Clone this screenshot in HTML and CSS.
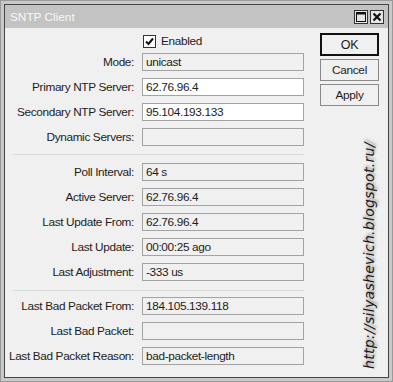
FILE: index.html
```html
<!DOCTYPE html>
<html>
<head>
<meta charset="utf-8">
<link rel="stylesheet" href="styles.css">
</head>
<body>
<div class="window">
  <div class="titlebar">
    <span class="title">SNTP Client</span>
    <div class="tbtns">
      <span class="tbtn"><svg width="12" height="12" viewBox="0 0 12 12"><rect x="1.5" y="1.5" width="9" height="9" fill="none" stroke="#111" stroke-width="1"/><rect x="1.5" y="1.5" width="9" height="2" fill="#111"/></svg></span>
      <span class="tbtn"><svg width="12" height="12" viewBox="0 0 12 12"><path d="M2.5 2.5 L9.5 9.5 M9.5 2.5 L2.5 9.5" stroke="#111" stroke-width="2.2"/></svg></span>
    </div>
  </div>
  <div class="content">
    <div class="form">
      <div class="row check-row">
        <span class="lbl"></span>
        <label class="check"><span class="box"><svg width="11" height="11" viewBox="0 0 11 11"><path d="M2 5.5 L4.5 8 L9 2.5" fill="none" stroke="#111" stroke-width="2"/></svg></span>Enabled</label>
      </div>
      <div class="row"><span class="lbl">Mode:</span><span class="field ro">unicast</span></div>
      <div class="row"><span class="lbl">Primary NTP Server:</span><span class="field ed">62.76.96.4</span></div>
      <div class="row"><span class="lbl">Secondary NTP Server:</span><span class="field ed">95.104.193.133</span></div>
      <div class="row"><span class="lbl">Dynamic Servers:</span><span class="field ro"></span></div>
      <div class="sep"></div>
      <div class="row"><span class="lbl">Poll Interval:</span><span class="field ro">64 s</span></div>
      <div class="row"><span class="lbl">Active Server:</span><span class="field ro">62.76.96.4</span></div>
      <div class="row"><span class="lbl">Last Update From:</span><span class="field ro">62.76.96.4</span></div>
      <div class="row"><span class="lbl">Last Update:</span><span class="field ro">00:00:25 ago</span></div>
      <div class="row"><span class="lbl">Last Adjustment:</span><span class="field ro">-333 us</span></div>
      <div class="sep sep2"></div>
      <div class="row"><span class="lbl">Last Bad Packet From:</span><span class="field ro">184.105.139.118</span></div>
      <div class="row"><span class="lbl">Last Bad Packet:</span><span class="field ro"></span></div>
      <div class="row"><span class="lbl">Last Bad Packet Reason:</span><span class="field ro">bad-packet-length</span></div>
    </div>
    <div class="buttons">
      <button class="btn default">OK</button>
      <button class="btn">Cancel</button>
      <button class="btn">Apply</button>
    </div>
    <div class="watermark">http://silyashevich.blogspot.ru/</div>
  </div>
</div>
</body>
</html>
```

FILE: styles.css
```css
html, body {
  margin: 0;
  padding: 0;
  background: #f0f0f0;
}
body {
  font-family: "Liberation Sans", Arial, sans-serif;
  font-size: 11.8px;
  letter-spacing: -0.35px;
  color: #1c1c1c;
}
.window {
  width: 393px;
  height: 382px;
  box-sizing: border-box;
  border: 1px solid #9a9a9a;
  background: #c9c9c9;
  padding: 3px;
  display: flex;
  flex-direction: column;
}
.titlebar {
  height: 23px;
  flex: none;
  background: #c3c3c3;
  border: 1px solid #444;
  border-bottom: none;
  display: flex;
  align-items: center;
  justify-content: space-between;
  padding: 0 4px 0 5px;
}
.title {
  color: #f7f7f7;
  font-family: "Liberation Sans", sans-serif;
  font-size: 11.8px;
  letter-spacing: 0;
}
.tbtns {
  display: flex;
  gap: 2px;
  margin-top: 1px;
}
.tbtn {
  width: 14px;
  height: 14px;
  box-sizing: border-box;
  border: 1px solid #333;
  background: #e6e6e6;
  display: flex;
  align-items: center;
  justify-content: center;
}
.content {
  flex: 1;
  position: relative;
  background: #f0f0f0;
  border: 1px solid #444;
  border-top: none;
  display: flex;
  padding: 4px 0 0 0;
}
.form {
  display: flex;
  flex-direction: column;
  width: 300px;
  flex: none;
}
.row {
  display: flex;
  align-items: center;
  height: 18px;
  margin-bottom: 7px;
}
.check-row {
  margin-bottom: 3px;
}
.lbl {
  width: 129px;
  flex: none;
  text-align: right;
  margin-right: 8px;
  white-space: nowrap;
}
.field {
  width: 162px;
  height: 18px;
  box-sizing: border-box;
  border: 1px solid #a3a3a3;
  padding: 0 0 0 3px;
  line-height: 16px;
  white-space: nowrap;
  overflow: hidden;
}
.field.ro {
  background: #f0f0f0;
}
.field.ed {
  background: #fff;
}
.check {
  display: flex;
  align-items: center;
  gap: 5px;
  margin-left: 1px;
}
.box {
  width: 13px;
  height: 13px;
  box-sizing: border-box;
  border: 1px solid #333;
  background: #fff;
  display: flex;
  align-items: center;
  justify-content: center;
}
.sep {
  height: 1px;
  background: #d9d9d9;
  margin: 1px 0 8px 8px;
  width: 291px;
}
.sep2 {
  margin: 2px 0 6px 8px;
}
.buttons {
  display: flex;
  flex-direction: column;
  gap: 3px;
  margin-left: 15px;
  padding-top: 1px;
}
.btn {
  width: 59px;
  height: 22px;
  box-sizing: border-box;
  border: 1px solid #8a8a8a;
  background: #f0f0f0;
  font-family: "Liberation Sans", Arial, sans-serif;
  font-size: 11.8px;
  letter-spacing: -0.3px;
  color: #1c1c1c;
  padding: 0;
}
.btn.default {
  border: 2px solid #111;
  height: 23px;
  font-size: 12.5px;
}
.watermark {
  position: absolute;
  left: 356px;
  top: 108px;
  height: 240px;
  writing-mode: vertical-rl;
  transform: rotate(180deg);
  font-family: "DejaVu Sans", sans-serif;
  font-style: oblique;
  font-size: 14px;
  color: #1a1a1a;
  text-shadow: 2px 1px 3px #8a8a8a;
  text-align: center;
  letter-spacing: 0.3px;
}
```
